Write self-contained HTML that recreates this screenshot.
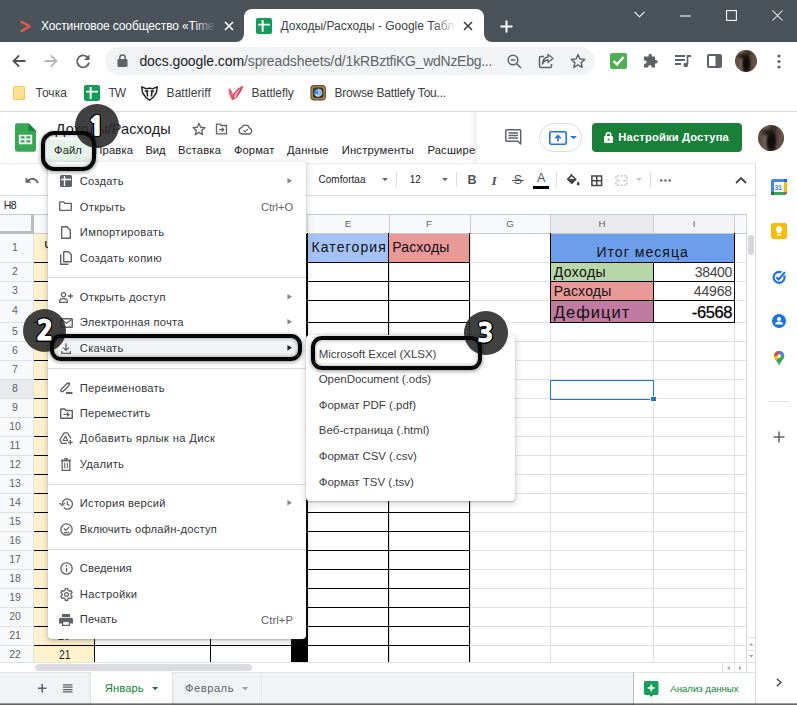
<!DOCTYPE html>
<html lang="ru">
<head>
<meta charset="utf-8">
<title>Доходы/Расходы - Google Таблицы</title>
<style>
html,body{margin:0;padding:0;}
body{width:797px;height:705px;overflow:hidden;position:relative;background:#fff;font-family:"Liberation Sans",sans-serif;color:#202124;}
.abs{position:absolute;}
.t{position:absolute;white-space:nowrap;line-height:1;}
svg{position:absolute;overflow:visible;}
/* ---------- browser chrome ---------- */
#tabbar{left:0;top:0;width:797px;height:43px;background:#4a535a;}
#tabactive{left:244px;top:9px;width:240px;height:34px;background:#fff;border-radius:8px 8px 0 0;}
#toolbar{left:0;top:42.400px;width:797px;height:35.600px;background:#fff;}
#omni{left:105px;top:47px;width:490px;height:28px;border-radius:14px;background:#f1f3f4;}
#bookbar{left:0;top:78px;width:797px;height:32.500px;background:#fff;border-bottom:1px solid #dadce0;}
.bm{font-size:12px;color:#3c4043;top:86.800px;}
/* ---------- sheets ---------- */
.menu{font-size:11.200px;color:#202124;}
.mi{font-size:11.200px;color:#33373b;left:79.800px;}
.sc{font-size:11.200px;color:#5f6368;}
.sm{font-size:11.500px;color:#3c4043;left:318.700px;}
.rh{font-size:10.500px;color:#5f6368;width:30px;text-align:center;left:0;}
.ch{font-size:9.700px;color:#5f6368;text-align:center;top:219px;}
.sep{position:absolute;height:1px;background:#dadce0;left:48px;width:258px;}
.cell{position:absolute;box-sizing:border-box;}
</style>
</head>
<body>
<!-- ================= BROWSER CHROME ================= -->
<div id="tabbar" class="abs"></div>
<div id="tabactive" class="abs"></div>
<!-- curved tab feet -->
<svg style="left:236px;top:34.400px" width="8" height="8"><path d="M8 0 V8 H0 A8 8 0 0 0 8 0Z" fill="#fff"/></svg>
<svg style="left:484px;top:34.400px" width="8" height="8"><path d="M0 0 V8 H8 A8 8 0 0 1 0 0Z" fill="#fff"/></svg>
<!-- inactive tab -->
<svg style="left:19.500px;top:19.500px" width="12" height="13" viewBox="0 0 12 13"><path d="M1.600 1.800 L9.600 6.400 L1.600 11" fill="none" stroke="#e05a4e" stroke-width="2.500" stroke-linejoin="round" stroke-linecap="round"/></svg>
<div class="t" style="letter-spacing:-0.110px;left:41px;top:20.400px;font-size:12px;color:#fff;">Хостинговое сообщество «Time</div>
<div class="abs" style="left:194px;top:14px;width:22px;height:24px;background:linear-gradient(90deg,rgba(74,83,90,0),#4a535a);"></div>
<svg style="left:224px;top:21px" width="10" height="10" viewBox="0 0 10 10"><path d="M1 1 L9 9 M9 1 L1 9" stroke="#fff" stroke-width="1.6"/></svg>
<!-- active tab -->
<svg style="left:256px;top:17.700px" width="16" height="16" viewBox="0 0 17 17"><rect width="17" height="17" rx="2" fill="#0f9d58"/><path d="M6 2.200 h2.100 v3.800 h6.700 v2.100 h-6.700 v6.700 h-2.100 v-6.700 h-3.800 v-2.100 h3.800z" fill="#fff"/></svg>
<div class="t" style="letter-spacing:-0.004px;left:280.400px;top:20.400px;font-size:12px;color:#3c4043;">Доходы/Расходы - Google Табл</div>
<div class="abs" style="left:434px;top:14px;width:22px;height:24px;background:linear-gradient(90deg,rgba(255,255,255,0),#fff);"></div>
<svg style="left:463px;top:21px" width="10" height="10" viewBox="0 0 10 10"><path d="M1 1 L9 9 M9 1 L1 9" stroke="#3c4043" stroke-width="1.6"/></svg>
<svg style="left:500px;top:20px" width="13" height="13" viewBox="0 0 13 13"><path d="M6.5 0.5 V12.5 M0.5 6.5 H12.5" stroke="#fff" stroke-width="2"/></svg>
<!-- window controls -->
<svg style="left:634px;top:11px" width="11" height="7" viewBox="0 0 11 7"><path d="M0.5 0.8 L5.5 5.800 L10.5 0.8" fill="none" stroke="#fff" stroke-width="1.050"/></svg>
<svg style="left:680px;top:14.500px" width="11" height="2" viewBox="0 0 11 2"><path d="M0 1 H11" stroke="#fff" stroke-width="1.050"/></svg>
<svg style="left:726px;top:10px" width="11" height="11" viewBox="0 0 11 11"><rect x="0.600" y="0.600" width="9.800" height="9.800" fill="none" stroke="#fff" stroke-width="1.050"/></svg>
<svg style="left:772px;top:10px" width="11" height="11" viewBox="0 0 11 11"><path d="M0.5 0.5 L10.5 10.500 M10.5 0.5 L0.5 10.500" stroke="#fff" stroke-width="1.050"/></svg>

<!-- toolbar -->
<div id="toolbar" class="abs"></div>
<svg style="left:12px;top:54px" width="14" height="14" viewBox="0 0 14 14"><path d="M13.500 7 H2 M7.200 1.300 L1.500 7 L7.200 12.700" fill="none" stroke="#4f5357" stroke-width="1.800"/></svg>
<svg style="left:44px;top:54px" width="14" height="14" viewBox="0 0 14 14"><path d="M0.500 7 H12 M6.800 1.300 L12.500 7 L6.800 12.700" fill="none" stroke="#b4b7bb" stroke-width="1.800"/></svg>
<svg style="left:75px;top:53px" width="16" height="16" viewBox="0 0 16 16"><path d="M13.2 5.2 A6 6 0 1 0 14 9.5" fill="none" stroke="#5f6368" stroke-width="1.8"/><path d="M14.5 1.5 V7 H9Z" fill="#5f6368"/></svg>
<div id="omni" class="abs"></div>
<svg style="left:117px;top:54px" width="11" height="13" viewBox="0 0 11 13"><rect x="0.5" y="5" width="10" height="8" rx="1.2" fill="#5f6368"/><path d="M2.8 5.5 V3.6 A2.7 2.7 0 0 1 8.2 3.6 V5.5" fill="none" stroke="#5f6368" stroke-width="1.5"/></svg>
<div class="t" style="letter-spacing:-0.083px;left:139.400px;top:54px;font-size:14px;color:#202124;">docs.google.com</div><div class="t" style="letter-spacing:-0.122px;left:244px;top:54px;font-size:14px;color:#5f6368;">/spreadsheets/d/1kRB</div><div class="t" style="letter-spacing:-0.282px;left:379.300px;top:54px;font-size:14px;color:#5f6368;">ztfiKG_wdNzEbg...</div>
<!-- omnibox icons -->
<svg style="left:507px;top:54px" width="15" height="15" viewBox="0 0 15 15"><circle cx="6" cy="6" r="4.8" fill="none" stroke="#5f6368" stroke-width="1.5"/><path d="M9.5 9.5 L14 14 M3.8 6 H8.2" stroke="#5f6368" stroke-width="1.5"/></svg>
<svg style="left:538px;top:53px" width="16" height="16" viewBox="0 0 16 16"><path d="M6 3.5 H3 A1.5 1.5 0 0 0 1.5 5 V13 A1.5 1.5 0 0 0 3 14.500 H12 A1.5 1.5 0 0 0 13.500 13 V11" fill="none" stroke="#5f6368" stroke-width="1.5"/><path d="M10 1.500 L15 5.500 L10 9.500 V7 C7 7 5.500 8.500 4.500 11 C4.700 7 6.500 4.300 10 4Z" fill="none" stroke="#5f6368" stroke-width="1.4" stroke-linejoin="round"/></svg>
<svg style="left:570px;top:53px" width="16" height="16" viewBox="0 0 16 16"><path d="M8 1.5 L9.900 6 L14.800 6.400 L11.100 9.600 L12.200 14.400 L8 11.900 L3.800 14.400 L4.900 9.600 L1.200 6.400 L6.100 6Z" fill="none" stroke="#5f6368" stroke-width="1.4" stroke-linejoin="round"/></svg>
<!-- extension icons -->
<svg style="left:610px;top:53px" width="17" height="16" viewBox="0 0 17 16"><rect width="17" height="16" rx="2" fill="#4caf50"/><path d="M3.500 8 L7 11.500 L13.500 4" fill="none" stroke="#fff" stroke-width="2.4"/></svg>
<svg style="left:642px;top:53px" width="16" height="16" viewBox="0 0 16 16"><path d="M6.500 2.500 A1.700 1.700 0 0 1 9.900 2.500 V3.500 H13 V7 H14 A1.700 1.700 0 0 1 14 10.400 H13 V14.500 H9.500 V13.500 A1.600 1.600 0 0 0 6.300 13.500 V14.500 H2 V10.700 H3 A1.600 1.600 0 0 0 3 7.500 H2 V3.500 H6.500Z" fill="#5f6368"/></svg>
<svg style="left:675px;top:54px" width="16" height="14" viewBox="0 0 16 14"><path d="M0 2 H10 M0 6 H10 M0 10 H6" stroke="#5f6368" stroke-width="1.8"/><path d="M12.500 1 V10.500" stroke="#5f6368" stroke-width="1.6"/><path d="M12.500 1 H16 V3 H12.500Z" fill="#5f6368"/><circle cx="10.800" cy="11" r="2.300" fill="#5f6368"/></svg>
<svg style="left:707px;top:54px" width="15" height="14" viewBox="0 0 15 14"><rect x="1" y="1" width="13" height="12" rx="1" fill="none" stroke="#5f6368" stroke-width="2"/><rect x="8.500" y="1" width="5.500" height="12" fill="#5f6368"/></svg>
<div class="abs" style="left:735px;top:50px;width:22px;height:22px;border-radius:50%;background:radial-gradient(ellipse 22% 50% at 52% 62%,#0d0b0b 0,#15110f 55%,rgba(21,17,15,0) 100%),radial-gradient(ellipse 30% 18% at 35% 28%,#1c1715 0,rgba(28,23,21,0) 100%),linear-gradient(95deg,#54443b 0,#705e53 30%,#4a3b34 45%,#3a2e29 58%,#5a4a41 75%,#66554b 88%,#43362f 100%);"></div>
<svg style="left:777px;top:54px" width="4" height="15" viewBox="0 0 4 15"><circle cx="2" cy="2" r="1.600" fill="#5f6368"/><circle cx="2" cy="7.500" r="1.600" fill="#5f6368"/><circle cx="2" cy="13" r="1.600" fill="#5f6368"/></svg>

<!-- bookmarks bar -->
<div id="bookbar" class="abs"></div>
<svg style="left:12.500px;top:86px" width="12" height="14" viewBox="0 0 12 14"><path d="M1.500 0.500 H10.500 A1 1 0 0 1 11.500 1.500 V13 A0.500 0.500 0 0 1 11 13.500 H1.500 A1 1 0 0 1 0.500 12.500 V1.500 A1 1 0 0 1 1.500 0.500Z" fill="#fde293" stroke="#f6c845" stroke-width="1"/><path d="M9.500 13.500 V11.500 H11.500" fill="none" stroke="#f6c845" stroke-width="1"/></svg>
<div class="t bm" style="letter-spacing:0.030px;left:35.500px;">Точка</div>
<svg style="left:84px;top:85px" width="16" height="16" viewBox="0 0 17 17"><rect width="17" height="17" rx="2" fill="#0f9d58"/><path d="M6 2.200 h2.100 v3.800 h6.700 v2.100 h-6.700 v6.700 h-2.100 v-6.700 h-3.800 v-2.100 h3.800z" fill="#fff"/></svg>
<div class="t bm" style="letter-spacing:-1.028px;left:108.400px;">TW</div>
<svg style="left:141.300px;top:85.500px" width="17" height="15" viewBox="0 0 17 15"><path d="M0.800 0.800 L5 2.700 L8.500 2.100 L12 2.700 L16.200 0.800 L15.500 6.500 L12.200 11.300 L8.500 14.200 L4.800 11.300 L1.500 6.500Z" fill="#fff" stroke="#1b1b1b" stroke-width="1.400" stroke-linejoin="round"/><path d="M3.800 5 H7.400 M5.900 5 L6.600 10.500 M9.600 5 H13.200 M11.100 5 L10.400 10.500" stroke="#1b1b1b" stroke-width="1.500" fill="none"/></svg>
<div class="t bm" style="letter-spacing:0.039px;left:166.600px;">Battleriff</div>
<svg style="left:227.500px;top:85px" width="16" height="15.500" viewBox="0 0 16 16"><path d="M0.500 3 C3.200 4.500 4.800 7.500 5.200 11.500 L3.600 14.800 C1.300 11.500 0.300 7.500 0.500 3Z" fill="#ea6074"/><path d="M3.600 15.600 C4 9 8.500 3.500 15.500 0.600 C14.800 4 13.200 7.500 10.500 10.800 C9 13.300 6.300 15.200 3.600 15.600Z" fill="#e4465c"/><path d="M5.800 12.800 C6.800 9 9.300 5.800 12.600 3.400 C10.600 6.300 9 9.300 8 12.600Z" fill="#fbd3d8"/></svg>
<div class="t bm" style="letter-spacing:-0.054px;left:251.600px;">Battlefly</div>
<svg style="left:309.500px;top:85.300px" width="16.300" height="15.500" viewBox="0 0 16 16"><rect x="0.600" y="0.600" width="14.800" height="14.800" rx="3.200" fill="#b08a4c" stroke="#6b5128" stroke-width="1.200"/><rect x="2.600" y="2.600" width="10.800" height="10.800" rx="2.600" fill="#3b2f22"/><circle cx="8" cy="8" r="4.300" fill="#3f86d2"/><path d="M8 4.600 A3.400 3.400 0 1 1 4.800 9.200 A2.300 2.300 0 1 0 8 6.200 A1.300 1.300 0 1 1 8 8.800" fill="none" stroke="#bfe4ff" stroke-width="1.100"/></svg>
<div class="t bm" style="letter-spacing:-0.197px;left:334.500px;">Browse Battlefy Tou...</div>


<!-- ================= SHEETS HEADER ================= -->
<svg style="left:15px;top:123px" width="21" height="29" viewBox="0 0 22 30"><path d="M2.500 0 H14 L22 8 V27.500 A2.500 2.500 0 0 1 19.500 30 H2.500 A2.500 2.500 0 0 1 0 27.500 V2.500 A2.500 2.500 0 0 1 2.500 0Z" fill="#34a853"/><path d="M14 0 L22 8 H14Z" fill="#188038"/><path d="M4 12 H18 V22 H4Z M6 13.800 V16.100 H10.100 V13.800Z M11.900 13.800 V16.100 H16 V13.800Z M6 17.900 V20.200 H10.100 V17.900Z M11.900 17.900 V20.200 H16 V17.900Z" fill="#fff" fill-rule="evenodd"/></svg>
<div class="t" style="letter-spacing:0.089px;left:55.600px;top:121.600px;font-size:14.500px;color:#202124;">Доходы/Расходы</div>
<svg style="left:192px;top:122px" width="14" height="14" viewBox="0 0 16 16"><path d="M8 1.500 L9.900 6 L14.800 6.400 L11.100 9.600 L12.200 14.400 L8 11.900 L3.800 14.400 L4.900 9.600 L1.200 6.400 L6.100 6Z" fill="none" stroke="#5f6368" stroke-width="1.500" stroke-linejoin="round"/></svg>
<svg style="left:215px;top:123px" width="13" height="12" viewBox="0 0 13 12"><path d="M1.500 1.200 H5 L6.200 2.500 H11.500 V10.800 H1.500Z" fill="none" stroke="#5f6368" stroke-width="1.300"/><path d="M4 6.700 H8.500 M6.800 4.800 L8.800 6.700 L6.800 8.600" fill="none" stroke="#5f6368" stroke-width="1.200"/></svg>
<svg style="left:238px;top:124px" width="15" height="11" viewBox="0 0 15 11"><path d="M4 10 A3.200 3.200 0 0 1 3.600 3.700 A4.200 4.200 0 0 1 11.500 4.200 A3 3 0 0 1 11.500 10Z" fill="none" stroke="#5f6368" stroke-width="1.300"/><path d="M5.500 6.500 L7 8 L9.800 5.200" fill="none" stroke="#5f6368" stroke-width="1.200"/></svg>
<!-- menubar -->
<div class="abs" style="left:48px;top:140px;width:40.600px;height:22px;background:#e6f4ea;border-radius:3px;"></div>
<div class="abs" style="left:0;top:139px;width:476px;height:24px;overflow:hidden;">
<div class="t menu" style="letter-spacing:0.096px;left:54.100px;top:6.200px;">Файл</div>
<div class="t menu" style="letter-spacing:0.167px;left:94.300px;top:6.200px;">Правка</div>
<div class="t menu" style="letter-spacing:-0.183px;left:145.600px;top:6.200px;">Вид</div>
<div class="t menu" style="letter-spacing:0.229px;left:178px;top:6.200px;">Вставка</div>
<div class="t menu" style="letter-spacing:0.125px;left:233.900px;top:6.200px;">Формат</div>
<div class="t menu" style="letter-spacing:0.196px;left:287px;top:6.200px;">Данные</div>
<div class="t menu" style="letter-spacing:0.230px;left:341.700px;top:6.200px;">Инструменты</div>
<div class="t menu" style="left:427.400px;top:6.200px;letter-spacing:.2px;">Расширения</div>
</div>
<div class="abs" style="left:469px;top:112px;width:8px;height:51px;background:linear-gradient(90deg,rgba(0,0,0,0),rgba(0,0,0,0.060));"></div>
<div class="abs" style="left:477px;top:112px;width:320px;height:51px;background:#fff;"></div>
<!-- comment icon -->
<svg style="left:505px;top:129px" width="17" height="16" viewBox="0 0 17 16"><path d="M1.800 0.800 H14.700 A1 1 0 0 1 15.700 1.800 V15 L12.800 12.300 H1.800 A1 1 0 0 1 0.800 11.300 V1.800 A1 1 0 0 1 1.800 0.800Z" fill="none" stroke="#5f6368" stroke-width="1.500" stroke-linejoin="round"/><path d="M3.500 4 H13 M3.500 6.500 H13 M3.500 9 H13" stroke="#5f6368" stroke-width="1.300"/></svg>
<!-- present pill -->
<div class="abs" style="left:539px;top:123px;width:43px;height:29px;border:1px solid #dadce0;border-radius:15px;box-sizing:border-box;"></div>
<svg style="left:549px;top:130.500px" width="18" height="14" viewBox="0 0 18 14"><rect x="0.800" y="0.800" width="16.400" height="12.400" rx="1.500" fill="none" stroke="#1a73e8" stroke-width="1.600"/><path d="M9 10.500 V5 M6.300 7.300 L9 4.600 L11.700 7.300" fill="none" stroke="#1a73e8" stroke-width="1.600"/></svg>
<svg style="left:570.300px;top:136.300px" width="7" height="3" viewBox="0 0 7 3"><path d="M0 0 H7 L3.500 3Z" fill="#1a73e8"/></svg>
<!-- share button -->
<div class="abs" style="left:592px;top:123px;width:150px;height:28.500px;background:#188038;border-radius:4px;"></div>
<svg style="left:604px;top:132px" width="9" height="11" viewBox="0 0 9 11"><rect x="0" y="4" width="9" height="7" rx="1" fill="#fff"/><path d="M2.200 4.500 V3 A2.300 2.300 0 0 1 6.800 3 V4.500" fill="none" stroke="#fff" stroke-width="1.400"/><circle cx="4.500" cy="7.500" r="1" fill="#188038"/></svg>
<div class="t" style="letter-spacing:0.152px;left:618.300px;top:132.200px;font-size:11.200px;font-weight:bold;color:#fff;">Настройки Доступа</div>
<div class="abs" style="left:757.700px;top:124.500px;width:26.500px;height:26.500px;border-radius:50%;background:radial-gradient(ellipse 22% 50% at 52% 62%,#0d0b0b 0,#15110f 55%,rgba(21,17,15,0) 100%),radial-gradient(ellipse 30% 18% at 35% 28%,#1c1715 0,rgba(28,23,21,0) 100%),linear-gradient(95deg,#54443b 0,#705e53 30%,#4a3b34 45%,#3a2e29 58%,#5a4a41 75%,#66554b 88%,#43362f 100%);"></div>

<!-- ================= TOOLBAR ================= -->
<div class="abs" style="left:0;top:163px;width:755px;height:1px;background:#e8eaed;"></div>
<div class="abs" style="left:0;top:195px;width:755px;height:1px;background:#dadce0;"></div>
<svg style="left:25px;top:176px" width="14" height="8" viewBox="0 0 14 8"><path d="M3.500 4.500 C6 2 10.500 2 13 7" fill="none" stroke="#5f6368" stroke-width="1.800"/><path d="M0.500 1.200 V6.800 H6.100Z" fill="#5f6368"/></svg>
<div class="t" style="letter-spacing:0.035px;left:318.500px;top:175.100px;font-size:10px;color:#202124;">Comfortaa</div>
<svg style="left:382px;top:178.300px" width="6" height="3.200" viewBox="0 0 7 4"><path d="M0 0 H7 L3.500 4Z" fill="#5f6368"/></svg>
<div class="abs" style="left:396px;top:171.500px;width:1px;height:15px;background:#dadce0;"></div>
<div class="t" style="letter-spacing:0.088px;left:409.700px;top:175.100px;font-size:10px;color:#202124;">12</div>
<svg style="left:442px;top:178.300px" width="6" height="3.200" viewBox="0 0 7 4"><path d="M0 0 H7 L3.500 4Z" fill="#5f6368"/></svg>
<div class="abs" style="left:456px;top:171.500px;width:1px;height:15px;background:#dadce0;"></div>
<div class="t" style="left:467.500px;top:174px;font-size:12.500px;font-weight:bold;color:#50545a;">B</div>
<div class="t" style="left:491.500px;top:173.500px;font-size:13.500px;font-weight:bold;font-style:italic;color:#50545a;font-family:'Liberation Serif',serif;">I</div>
<div class="t" style="left:513.700px;top:174px;font-size:12.500px;color:#50545a;">S</div><div class="abs" style="left:512px;top:180px;width:11.500px;height:1.200px;background:#50545a;"></div>
<div class="t" style="left:537px;top:172px;font-size:12.500px;color:#50545a;">A</div>
<div class="abs" style="left:533px;top:185.500px;width:16px;height:3px;background:#000;"></div>
<div class="abs" style="left:556px;top:171.500px;width:1px;height:15px;background:#dadce0;"></div>
<svg style="left:566px;top:173px" width="14" height="13" viewBox="0 0 14 13"><path d="M4.500 0.800 L10 6.300 L5.800 10.500 L1.400 6.100 L5.700 1.900" fill="#444746" stroke="#444746" stroke-width="1.200" stroke-linejoin="round"/><path d="M3.200 6 L5.800 3.400 L8.400 6Z" fill="#fff"/><path d="M12.200 8.200 C13 9.400 13.600 10.200 13.600 11 A1.400 1.400 0 0 1 10.800 11 C10.800 10.200 11.400 9.400 12.200 8.200Z" fill="#444746"/></svg>
<svg style="left:590.500px;top:174.500px" width="11.500" height="11.500" viewBox="0 0 13 13"><path d="M1 1 H12 V12 H1Z M6.500 1 V12 M1 6.500 H12" fill="none" stroke="#444746" stroke-width="1.700"/></svg>
<svg style="left:614.500px;top:174.500px" width="13" height="11" viewBox="0 0 14 12"><path d="M1 4 V1 H13 V4 M1 8 V11 H13 V8" fill="none" stroke="#bdc1c6" stroke-width="1.500" stroke-dasharray="2.500 1.500"/><path d="M1.500 6 H5 M12.500 6 H9" stroke="#bdc1c6" stroke-width="1.500"/></svg>
<svg style="left:636px;top:178.300px" width="6" height="3.200" viewBox="0 0 7 4"><path d="M0 0 H7 L3.500 4Z" fill="#bdc1c6"/></svg>
<div class="abs" style="left:650px;top:171.500px;width:1px;height:15px;background:#dadce0;"></div>
<svg style="left:660px;top:179px" width="11" height="3" viewBox="0 0 11 3"><circle cx="1.300" cy="1.500" r="1.200" fill="#5f6368"/><circle cx="5.500" cy="1.500" r="1.200" fill="#5f6368"/><circle cx="9.700" cy="1.500" r="1.200" fill="#5f6368"/></svg>
<svg style="left:735px;top:176px" width="12" height="8" viewBox="0 0 12 8"><path d="M1 7 L6 2 L11 7" fill="none" stroke="#444746" stroke-width="1.800"/></svg>

<!-- ================= SIDE PANEL ================= -->
<div class="abs" style="left:755px;top:163px;width:1px;height:542px;background:#dadce0;"></div>
<div class="abs" style="left:756px;top:163px;width:41px;height:542px;background:#fff;"></div>
<!-- calendar -->
<svg style="left:771px;top:179px" width="16" height="16" viewBox="0 0 16 16"><rect x="0" y="0" width="16" height="16" rx="2" fill="#4285f4"/><rect x="3" y="3" width="10" height="10" fill="#fff"/><path d="M13 13 H16 L13 16Z" fill="#ea4335"/><rect x="0" y="13" width="13" height="3" fill="#34a853"/><rect x="13" y="3" width="3" height="10" fill="#fbbc04"/><rect x="0" y="3" width="3" height="10" fill="#4285f4"/><rect x="0" y="13" width="3" height="3" fill="#188038"/><rect x="13" y="0" width="3" height="3" fill="#1967d2"/></svg>
<div class="t" style="left:774.500px;top:183.500px;font-size:7px;font-weight:bold;color:#4285f4;letter-spacing:-0.300px;">31</div>
<!-- keep -->
<svg style="left:771px;top:223px" width="16" height="16" viewBox="0 0 16 16"><rect width="16" height="16" rx="2" fill="#fbbc04"/><path d="M8 3 A3.200 3.200 0 0 1 10 8.700 V10 H6 V8.700 A3.200 3.200 0 0 1 8 3Z" fill="#fff"/><rect x="6" y="11" width="4" height="1.500" fill="#fff"/></svg>
<!-- tasks -->
<svg style="left:772.200px;top:269.500px" width="14" height="14" viewBox="0 0 16 16"><path d="M14 6.200 A6.300 6.300 0 1 1 10.800 2.700" fill="none" stroke="#1a73e8" stroke-width="2.500"/><path d="M5 8.200 L7.600 10.800 L14.800 2.400" fill="none" stroke="#1a73e8" stroke-width="2.500"/></svg>
<!-- contacts -->
<svg style="left:772.200px;top:314.200px" width="14" height="14" viewBox="0 0 16 16"><circle cx="8" cy="8" r="8" fill="#1a73e8"/><circle cx="8" cy="5.800" r="2.300" fill="#fff"/><path d="M3.500 12 A4.500 3.500 0 0 1 12.500 12Z" fill="#fff"/></svg>
<!-- maps -->
<svg style="left:774.400px;top:351px" width="10.300" height="14.500" viewBox="0 0 12 17"><path d="M6 0 A6 6 0 0 1 12 6 C12 10 8 12 6 17 C4 12 0 10 0 6 A6 6 0 0 1 6 0Z" fill="#34a853"/><path d="M6 0 A6 6 0 0 1 12 6 L6 6Z" fill="#4285f4"/><path d="M6 0 A6 6 0 0 0 0 6 L6 6Z" fill="#ea4335"/><path d="M0 6 C0 8 1.500 10 3 11.500 L6 6Z" fill="#fbbc04"/><circle cx="6" cy="6" r="2.200" fill="#fff"/></svg>
<div class="abs" style="left:769px;top:401px;width:20px;height:1px;background:#dadce0;"></div>
<svg style="left:773px;top:431px" width="12" height="12" viewBox="0 0 12 12"><path d="M6 0.500 V11.500 M0.500 6 H11.500" stroke="#5f6368" stroke-width="1.500"/></svg>
<svg style="left:775.500px;top:677.500px" width="5.700" height="9" viewBox="0 0 7 11"><path d="M1 1 L6 5.500 L1 10" fill="none" stroke="#444746" stroke-width="1.600"/></svg>

<!-- ================= FORMULA BAR ================= -->
<div class="t" style="letter-spacing:-0.669px;left:3.800px;top:200.400px;font-size:10.500px;color:#202124;">H8</div>
<div class="abs" style="left:0;top:214px;width:747px;height:1px;background:#c6c8ca;"></div>


<div class="abs" id="grid" style="left:0;top:215px;width:755px;height:447px;overflow:hidden;background:#fff;">
<div class="abs" style="left:0;top:0;width:746px;height:18px;background:#f8f9fa;"></div>
<div class="abs" style="left:550px;top:0;width:103px;height:18px;background:#e8eaed;"></div>
<div class="abs" style="left:653px;top:0;width:82px;height:18px;background:#f1f3f4;"></div>
<div class="abs" style="left:0;top:0;width:34px;height:447px;background:#f8f9fa;"></div>
<div class="abs" style="left:0;top:164px;width:34px;height:19px;background:#e8eaed;"></div>
<div class="abs" style="left:34px;top:19px;width:61px;height:428px;background:#fff2cc;"></div>
<div class="abs" style="left:0;top:47px;width:746px;height:1px;background:#e1e1e1;"></div>
<div class="abs" style="left:0;top:66px;width:746px;height:1px;background:#e1e1e1;"></div>
<div class="abs" style="left:0;top:85px;width:746px;height:1px;background:#e1e1e1;"></div>
<div class="abs" style="left:0;top:107px;width:746px;height:1px;background:#e1e1e1;"></div>
<div class="abs" style="left:0;top:126px;width:746px;height:1px;background:#e1e1e1;"></div>
<div class="abs" style="left:0;top:145px;width:746px;height:1px;background:#e1e1e1;"></div>
<div class="abs" style="left:0;top:164px;width:746px;height:1px;background:#e1e1e1;"></div>
<div class="abs" style="left:0;top:183px;width:746px;height:1px;background:#e1e1e1;"></div>
<div class="abs" style="left:0;top:202px;width:746px;height:1px;background:#e1e1e1;"></div>
<div class="abs" style="left:0;top:221px;width:746px;height:1px;background:#e1e1e1;"></div>
<div class="abs" style="left:0;top:240px;width:746px;height:1px;background:#e1e1e1;"></div>
<div class="abs" style="left:0;top:259px;width:746px;height:1px;background:#e1e1e1;"></div>
<div class="abs" style="left:0;top:278px;width:746px;height:1px;background:#e1e1e1;"></div>
<div class="abs" style="left:0;top:297px;width:746px;height:1px;background:#e1e1e1;"></div>
<div class="abs" style="left:0;top:316px;width:746px;height:1px;background:#e1e1e1;"></div>
<div class="abs" style="left:0;top:335px;width:746px;height:1px;background:#e1e1e1;"></div>
<div class="abs" style="left:0;top:354px;width:746px;height:1px;background:#e1e1e1;"></div>
<div class="abs" style="left:0;top:373px;width:746px;height:1px;background:#e1e1e1;"></div>
<div class="abs" style="left:0;top:392px;width:746px;height:1px;background:#e1e1e1;"></div>
<div class="abs" style="left:0;top:411px;width:746px;height:1px;background:#e1e1e1;"></div>
<div class="abs" style="left:0;top:430px;width:746px;height:1px;background:#e1e1e1;"></div>
<div class="abs" style="left:33px;top:0;width:1px;height:447px;background:#e1e1e1;"></div>
<div class="abs" style="left:307px;top:0;width:1px;height:447px;background:#e1e1e1;"></div>
<div class="abs" style="left:389px;top:0;width:1px;height:447px;background:#e1e1e1;"></div>
<div class="abs" style="left:470px;top:0;width:1px;height:447px;background:#e1e1e1;"></div>
<div class="abs" style="left:550px;top:0;width:1px;height:447px;background:#e1e1e1;"></div>
<div class="abs" style="left:653px;top:0;width:1px;height:447px;background:#e1e1e1;"></div>
<div class="abs" style="left:734px;top:0;width:1px;height:447px;background:#e1e1e1;"></div>
<div class="abs" style="left:746px;top:0;width:1px;height:447px;background:#e1e1e1;"></div>
<div class="abs" style="left:389px;top:0;width:1px;height:18px;background:#c9cbcd;"></div>
<div class="abs" style="left:470px;top:0;width:1px;height:18px;background:#c9cbcd;"></div>
<div class="abs" style="left:550px;top:0;width:1px;height:18px;background:#c9cbcd;"></div>
<div class="abs" style="left:653px;top:0;width:1px;height:18px;background:#c9cbcd;"></div>
<div class="abs" style="left:734px;top:0;width:1px;height:18px;background:#c9cbcd;"></div>
<div class="abs" style="left:746px;top:0;width:1px;height:18px;background:#c9cbcd;"></div>
<div class="abs" style="left:0;top:18px;width:746px;height:1px;background:#c8cacd;"></div>
<div class="abs" style="left:0;top:16px;width:34px;height:3px;background:#b9bbbe;"></div>
<div class="abs" style="left:31px;top:0;width:3px;height:19px;background:#b9bbbe;"></div>
<div class="t ch" style="left:338px;width:20px;top:4px;">E</div>
<div class="t ch" style="left:419px;width:20px;top:4px;">F</div>
<div class="t ch" style="left:500px;width:20px;top:4px;">G</div>
<div class="t ch" style="left:592px;width:20px;top:4px;">H</div>
<div class="t ch" style="left:684px;width:20px;top:4px;">I</div>
<div class="t rh" style="top:27.4px;">1</div>
<div class="t rh" style="top:50.9px;">2</div>
<div class="t rh" style="top:69.9px;">3</div>
<div class="t rh" style="top:90.4px;">4</div>
<div class="t rh" style="top:110.9px;">5</div>
<div class="t rh" style="top:129.9px;">6</div>
<div class="t rh" style="top:148.9px;">7</div>
<div class="t rh" style="top:167.9px;">8</div>
<div class="t rh" style="top:186.9px;">9</div>
<div class="t rh" style="top:205.9px;">10</div>
<div class="t rh" style="top:224.9px;">11</div>
<div class="t rh" style="top:243.9px;">12</div>
<div class="t rh" style="top:262.9px;">13</div>
<div class="t rh" style="top:281.9px;">14</div>
<div class="t rh" style="top:300.9px;">15</div>
<div class="t rh" style="top:319.9px;">16</div>
<div class="t rh" style="top:338.9px;">17</div>
<div class="t rh" style="top:357.9px;">18</div>
<div class="t rh" style="top:376.9px;">19</div>
<div class="t rh" style="top:395.9px;">20</div>
<div class="t rh" style="top:414.9px;">21</div>
<div class="t rh" style="top:433.9px;">22</div>
<div class="abs" style="left:34px;top:47px;width:273px;height:1px;background:#000;"></div>
<div class="abs" style="left:34px;top:66px;width:273px;height:1px;background:#000;"></div>
<div class="abs" style="left:34px;top:85px;width:273px;height:1px;background:#000;"></div>
<div class="abs" style="left:34px;top:107px;width:273px;height:1px;background:#000;"></div>
<div class="abs" style="left:34px;top:126px;width:273px;height:1px;background:#000;"></div>
<div class="abs" style="left:34px;top:145px;width:273px;height:1px;background:#000;"></div>
<div class="abs" style="left:34px;top:164px;width:273px;height:1px;background:#000;"></div>
<div class="abs" style="left:34px;top:183px;width:273px;height:1px;background:#000;"></div>
<div class="abs" style="left:34px;top:202px;width:273px;height:1px;background:#000;"></div>
<div class="abs" style="left:34px;top:221px;width:273px;height:1px;background:#000;"></div>
<div class="abs" style="left:34px;top:240px;width:273px;height:1px;background:#000;"></div>
<div class="abs" style="left:34px;top:259px;width:273px;height:1px;background:#000;"></div>
<div class="abs" style="left:34px;top:278px;width:273px;height:1px;background:#000;"></div>
<div class="abs" style="left:34px;top:297px;width:273px;height:1px;background:#000;"></div>
<div class="abs" style="left:34px;top:316px;width:273px;height:1px;background:#000;"></div>
<div class="abs" style="left:34px;top:335px;width:273px;height:1px;background:#000;"></div>
<div class="abs" style="left:34px;top:354px;width:273px;height:1px;background:#000;"></div>
<div class="abs" style="left:34px;top:373px;width:273px;height:1px;background:#000;"></div>
<div class="abs" style="left:34px;top:392px;width:273px;height:1px;background:#000;"></div>
<div class="abs" style="left:34px;top:411px;width:273px;height:1px;background:#000;"></div>
<div class="abs" style="left:34px;top:430px;width:273px;height:1px;background:#000;"></div>
<div class="abs" style="left:94px;top:19px;width:1px;height:428px;background:#000;"></div>
<div class="abs" style="left:210px;top:19px;width:1px;height:428px;background:#000;"></div>
<div class="abs" style="left:291px;top:19px;width:17px;height:428px;background:#000;"></div>
<div class="t cf" style="left:44px;top:24.3px;font-size:14px;color:#222;">Число</div>
<div class="t" style="left:58px;top:414.1px;font-size:13.500px;color:#222;transform:scaleX(.8);transform-origin:0 50%;">20</div>
<div class="t" style="left:58.700px;top:433.1px;font-size:13.500px;color:#222;transform:scaleX(.77);transform-origin:0 50%;">21</div>
<div class="abs" style="left:308px;top:19px;width:81px;height:28px;background:#a4c2f4;"></div>
<div class="abs" style="left:389px;top:19px;width:81px;height:28px;background:#ea9999;"></div>
<div class="t cf" style="letter-spacing:1.127px;left:311.400px;top:24.9px;font-size:14px;color:#111;">Категория</div>
<div class="t cf" style="letter-spacing:0.169px;left:392.200px;top:24.9px;font-size:14px;color:#111;">Расходы</div>
<div class="abs" style="left:307px;top:47px;width:163px;height:1px;background:#000;"></div>
<div class="abs" style="left:307px;top:66px;width:163px;height:1px;background:#000;"></div>
<div class="abs" style="left:307px;top:85px;width:163px;height:1px;background:#000;"></div>
<div class="abs" style="left:307px;top:107px;width:163px;height:1px;background:#000;"></div>
<div class="abs" style="left:307px;top:126px;width:163px;height:1px;background:#000;"></div>
<div class="abs" style="left:307px;top:145px;width:163px;height:1px;background:#000;"></div>
<div class="abs" style="left:307px;top:164px;width:163px;height:1px;background:#000;"></div>
<div class="abs" style="left:307px;top:183px;width:163px;height:1px;background:#000;"></div>
<div class="abs" style="left:307px;top:202px;width:163px;height:1px;background:#000;"></div>
<div class="abs" style="left:307px;top:221px;width:163px;height:1px;background:#000;"></div>
<div class="abs" style="left:307px;top:240px;width:163px;height:1px;background:#000;"></div>
<div class="abs" style="left:307px;top:259px;width:163px;height:1px;background:#000;"></div>
<div class="abs" style="left:307px;top:278px;width:163px;height:1px;background:#000;"></div>
<div class="abs" style="left:307px;top:297px;width:163px;height:1px;background:#000;"></div>
<div class="abs" style="left:307px;top:316px;width:163px;height:1px;background:#000;"></div>
<div class="abs" style="left:307px;top:335px;width:163px;height:1px;background:#000;"></div>
<div class="abs" style="left:307px;top:354px;width:163px;height:1px;background:#000;"></div>
<div class="abs" style="left:307px;top:373px;width:163px;height:1px;background:#000;"></div>
<div class="abs" style="left:307px;top:392px;width:163px;height:1px;background:#000;"></div>
<div class="abs" style="left:307px;top:411px;width:163px;height:1px;background:#000;"></div>
<div class="abs" style="left:307px;top:430px;width:163px;height:1px;background:#000;"></div>
<div class="abs" style="left:306.5px;top:18px;width:1px;height:429px;background:#000;"></div>
<div class="abs" style="left:388px;top:18px;width:1px;height:429px;background:#000;"></div>
<div class="abs" style="left:469px;top:18px;width:1px;height:429px;background:#000;"></div>
<div class="abs" style="left:550px;top:19px;width:185px;height:28px;background:#6d9eeb;"></div>
<div class="abs" style="left:550px;top:47px;width:103px;height:19px;background:#b6d7a8;"></div>
<div class="abs" style="left:550px;top:66px;width:103px;height:19px;background:#ea9999;"></div>
<div class="abs" style="left:550px;top:85px;width:103px;height:22px;background:#c27ba0;"></div>
<div class="t cf" style="letter-spacing:1.045px;left:596.400px;top:30.2px;font-size:14px;color:#111;">Итог месяца</div>
<div class="t cf" style="letter-spacing:0.395px;left:553.800px;top:50.0px;font-size:14px;color:#111;">Доходы</div>
<div class="t cf" style="letter-spacing:0.212px;left:553.800px;top:68.8px;font-size:14px;color:#111;">Расходы</div>
<div class="t cf" style="letter-spacing:1.018px;left:553.800px;top:89.3px;font-size:16.500px;color:#111;">Дефицит</div>
<div class="t" style="letter-spacing:-0.347px;left:694.800px;top:50.0px;font-size:14px;color:#444;">38400</div>
<div class="t" style="letter-spacing:-0.147px;left:693.800px;top:68.8px;font-size:14px;color:#444;">44968</div>
<div class="t" style="letter-spacing:-0.401px;left:691.800px;top:88.8px;font-size:16.500px;color:#000;-webkit-text-stroke:.25px #000;">-6568</div>
<div class="abs" style="left:550px;top:47px;width:185px;height:1px;background:#000;"></div>
<div class="abs" style="left:550px;top:66px;width:185px;height:1px;background:#000;"></div>
<div class="abs" style="left:550px;top:85px;width:185px;height:1px;background:#000;"></div>
<div class="abs" style="left:550px;top:107px;width:185px;height:1px;background:#000;"></div>
<div class="abs" style="left:549.5px;top:18px;width:1px;height:90px;background:#000;"></div>
<div class="abs" style="left:653px;top:47px;width:1px;height:61px;background:#000;"></div>
<div class="abs" style="left:734px;top:18px;width:1px;height:90px;background:#000;"></div>
<div class="abs" style="left:550px;top:165.2px;width:104px;height:19.500px;border:1.500px solid #1a73e8;box-sizing:border-box;"></div>
<div class="abs" style="left:650px;top:180.8px;width:5px;height:4.600px;background:#1a73e8;border:1px solid #fff;box-sizing:content-box;"></div>
</div>
<div class="abs" style="left:746px;top:215px;width:9px;height:447px;background:#fff;border-left:1px solid #d5d7d9;box-sizing:border-box;"></div>
<div class="abs" style="left:747.500px;top:234.800px;width:6.200px;height:19.800px;background:#d5d7db;border-radius:3.100px;"></div>
<div class="abs" style="left:746px;top:637px;width:9px;height:1px;background:#e1e1e1;"></div>
<div class="abs" style="left:746px;top:650px;width:9px;height:1px;background:#e1e1e1;"></div>
<svg style="left:748.500px;top:642.500px" width="4.400" height="2.600" viewBox="0 0 5 3"><path d="M0 3 H5 L2.500 0Z" fill="#9aa0a6"/></svg>
<svg style="left:748.500px;top:655px" width="4.400" height="2.600" viewBox="0 0 5 3"><path d="M0 0 H5 L2.500 3Z" fill="#9aa0a6"/></svg>
<div class="abs" style="left:0;top:662px;width:755px;height:10px;background:#fff;border-top:1px solid #e1e1e1;box-sizing:border-box;"></div>
<div class="abs" style="left:35px;top:664px;width:216.500px;height:7px;background:#dadce0;border-radius:4px;"></div>
<div class="abs" style="left:722px;top:662px;width:1px;height:10px;background:#e1e1e1;"></div>
<div class="abs" style="left:734px;top:662px;width:1px;height:10px;background:#e1e1e1;"></div>
<div class="abs" style="left:746px;top:662px;width:1px;height:10px;background:#e1e1e1;"></div>
<svg style="left:726.500px;top:665.500px" width="2.600" height="4.400" viewBox="0 0 3 5"><path d="M3 0 V5 L0 2.500Z" fill="#9aa0a6"/></svg>
<svg style="left:739px;top:665.500px" width="2.600" height="4.400" viewBox="0 0 3 5"><path d="M0 0 V5 L3 2.500Z" fill="#9aa0a6"/></svg>
<div class="abs" style="left:0;top:672px;width:755px;height:33px;background:#f1f3f4;border-top:1px solid #e1e3e6;box-sizing:border-box;"></div>
<svg style="left:37.700px;top:684.200px" width="8.400" height="8.400" viewBox="0 0 10 10"><path d="M5 0 V10 M0 5 H10" stroke="#5f6368" stroke-width="1.900"/></svg>
<svg style="left:62.500px;top:684px" width="9.500" height="8.700" viewBox="0 0 11 10"><path d="M0 1 H11 M0 3.700 H11 M0 6.400 H11 M0 9.100 H11" stroke="#5f6368" stroke-width="1.500"/></svg>
<div class="abs" style="left:91px;top:672px;width:81px;height:33px;background:#fff;box-shadow:0 1px 3px rgba(0,0,0,.18);"></div><div class="abs" style="left:261px;top:672px;width:1px;height:33px;background:#e4e6e8;"></div>
<div class="t" style="letter-spacing:0.090px;left:104.800px;top:682.700px;font-size:11.200px;color:#188038;">Январь</div>
<svg style="left:151.800px;top:687px" width="6.400" height="3.300" viewBox="0 0 8 4"><path d="M0 0 H8 L4 4Z" fill="#188038"/></svg>
<div class="t" style="letter-spacing:0.502px;left:185px;top:682.700px;font-size:11.200px;color:#5f6368;">Февраль</div>
<svg style="left:242.400px;top:687px" width="6.400" height="3.300" viewBox="0 0 8 4"><path d="M0 0 H8 L4 4Z" fill="#9aa0a6"/></svg>
<div class="abs" style="left:633px;top:672px;width:122px;height:33px;background:#fdfefe;border-left:1px solid #b8babd;border-top:1px solid #e1e3e6;box-sizing:border-box;"></div>
<svg style="left:644px;top:681px" width="14.500" height="16.500" viewBox="0 0 15 17"><path d="M1.500 0 H13.500 A1.500 1.500 0 0 1 15 1.500 V13 A1.500 1.500 0 0 1 13.500 14.500 H9.500 L7.500 16.500 L5.500 14.500 H1.500 A1.500 1.500 0 0 1 0 13 V1.500 A1.500 1.500 0 0 1 1.500 0Z" fill="#12a05a"/><path d="M7.500 2.800 L8.700 6 L12 7.300 L8.700 8.600 L7.500 11.800 L6.300 8.600 L3 7.300 L6.300 6Z" fill="#fff"/></svg>
<div class="t" style="letter-spacing:-0.006px;left:670.300px;top:684px;font-size:9.600px;color:#188038;">Анализ данных</div>
<div class="abs" style="left:0;top:703px;width:797px;height:2px;background:linear-gradient(180deg,rgba(60,60,60,.35),rgba(30,30,30,.8));"></div>

<div class="abs" style="left:48px;top:162px;width:258px;height:476.500px;background:#fff;border-radius:0 0 4px 4px;box-shadow:0 2px 6px 2px rgba(60,64,67,.15),0 1px 2px rgba(60,64,67,.3);"></div>
<div class="abs" style="left:52px;top:336px;width:248px;height:23px;background:#f1f3f4;border-radius:6px;"></div>
<div class="t mi" style="letter-spacing:0.198px;top:175.5px;">Создать</div>
<svg style="left:287.200px;top:177.6px" width="5.400" height="5.400" viewBox="0 0 5 6"><path d="M0 0 L5 3 L0 6Z" fill="#80868b"/></svg>
<div class="t mi" style="letter-spacing:0.280px;top:201.5px;">Открыть</div>
<div class="t sc" style="letter-spacing:-0.107px;left:233px;width:60px;text-align:right;top:202.0px;">Ctrl+O</div>
<div class="t mi" style="letter-spacing:0.303px;top:226.9px;">Импортировать</div>
<div class="t mi" style="letter-spacing:0.348px;top:252.7px;">Создать копию</div>
<div class="t mi" style="letter-spacing:0.265px;top:291.7px;">Открыть доступ</div>
<svg style="left:287.200px;top:293.8px" width="5.400" height="5.400" viewBox="0 0 5 6"><path d="M0 0 L5 3 L0 6Z" fill="#80868b"/></svg>
<div class="t mi" style="letter-spacing:0.244px;top:317.3px;">Электронная почта</div>
<svg style="left:287.200px;top:319.4px" width="5.400" height="5.400" viewBox="0 0 5 6"><path d="M0 0 L5 3 L0 6Z" fill="#80868b"/></svg>
<div class="t mi" style="letter-spacing:0.264px;top:342.7px;">Скачать</div>
<svg style="left:287.200px;top:344.8px" width="5.400" height="5.400" viewBox="0 0 5 6"><path d="M0 0 L5 3 L0 6Z" fill="#202124"/></svg>
<div class="t mi" style="letter-spacing:0.236px;top:382.8px;">Переименовать</div>
<div class="t mi" style="letter-spacing:0.187px;top:407.7px;">Переместить</div>
<div class="t mi" style="letter-spacing:0.389px;top:433.3px;">Добавить ярлык на Диск</div>
<div class="t mi" style="letter-spacing:0.240px;top:458.9px;">Удалить</div>
<div class="t mi" style="letter-spacing:0.224px;top:498.3px;">История версий</div>
<svg style="left:287.200px;top:500.4px" width="5.400" height="5.400" viewBox="0 0 5 6"><path d="M0 0 L5 3 L0 6Z" fill="#80868b"/></svg>
<div class="t mi" style="letter-spacing:0.208px;top:523.7px;">Включить офлайн-доступ</div>
<div class="t mi" style="letter-spacing:0.099px;top:563.2px;">Сведения</div>
<div class="t mi" style="letter-spacing:0.282px;top:588.7px;">Настройки</div>
<div class="t mi" style="letter-spacing:0.141px;top:614.4px;">Печать</div>
<div class="t sc" style="letter-spacing:0.099px;left:233px;width:60px;text-align:right;top:614.9px;">Ctrl+P</div>
<div class="sep" style="top:277.0px;"></div>
<div class="sep" style="top:367.5px;"></div>
<div class="sep" style="top:483.5px;"></div>
<div class="sep" style="top:548.5px;"></div>
<svg style="left:60.0px;top:175.3px" width="12" height="12" viewBox="0 0 12 12"><rect width="12" height="12" rx="1.500" fill="#5f6368"/><path d="M4.500 1 V11 M1 4.500 H11" stroke="#fff" stroke-width="1.300"/></svg>
<svg style="left:59.3px;top:201.4px" width="13" height="10" viewBox="0 0 13 10"><path d="M0.700 0.900 H4.600 L5.800 2.300 H12.300 V9.300 H0.700Z" fill="none" stroke="#5f6368" stroke-width="1.350" stroke-linejoin="round"/></svg>
<svg style="left:61.0px;top:225.9px" width="10" height="13" viewBox="0 0 10 13"><path d="M0.700 0.700 H6 L9.300 4 V12.300 H0.700Z" fill="none" stroke="#5f6368" stroke-width="1.400" stroke-linejoin="round"/></svg>
<svg style="left:60.0px;top:251.2px" width="12" height="14" viewBox="0 0 12 14"><path d="M3.700 0.700 H8.500 L11.300 3.500 V10.800 H3.700Z" fill="none" stroke="#5f6368" stroke-width="1.400" stroke-linejoin="round"/><path d="M0.700 3.200 V13.300 H8.500" fill="none" stroke="#5f6368" stroke-width="1.400"/></svg>
<svg style="left:59.0px;top:291.7px" width="14" height="11" viewBox="0 0 14 11"><circle cx="4.500" cy="2.800" r="2.100" fill="none" stroke="#5f6368" stroke-width="1.300"/><path d="M0.700 10.300 V9 C0.700 7.300 2.800 6.600 4.500 6.600 C6.200 6.600 8.300 7.300 8.300 9 V10.300Z" fill="none" stroke="#5f6368" stroke-width="1.300"/><path d="M11.500 1.500 V6.500 M9 4 H14" stroke="#5f6368" stroke-width="1.300"/></svg>
<svg style="left:59.5px;top:317.8px" width="13" height="10" viewBox="0 0 13 10"><rect x="0.700" y="0.700" width="11.600" height="8.600" rx="0.800" fill="none" stroke="#5f6368" stroke-width="1.400"/><path d="M1 1.300 L6.500 5.300 L12 1.300" fill="none" stroke="#5f6368" stroke-width="1.300"/></svg>
<svg style="left:61.0px;top:342.9px" width="10" height="11" viewBox="0 0 10 11"><path d="M5 0.300 V7.300 M2.200 4.600 L5 7.400 L7.800 4.600" fill="none" stroke="#5f6368" stroke-width="1.300"/><path d="M0.650 8 V10.300 H9.350 V8" fill="none" stroke="#5f6368" stroke-width="1.300"/></svg>
<svg style="left:59.5px;top:382.3px" width="13" height="12" viewBox="0 0 13 12"><path d="M1 9.500 V7.500 L7.500 1 L9.500 3 L3 9.500Z" fill="none" stroke="#5f6368" stroke-width="1.300" stroke-linejoin="round"/><path d="M6 11 H12.500" stroke="#5f6368" stroke-width="2"/><path d="M8.500 0.500 L10 2" stroke="#5f6368" stroke-width="1.300"/></svg>
<svg style="left:59.5px;top:407.7px" width="13" height="11" viewBox="0 0 13 11"><path d="M0.700 1 H4.800 L6 2.500 H12.300 V10.300 H0.700Z" fill="none" stroke="#5f6368" stroke-width="1.400" stroke-linejoin="round"/><path d="M3.500 6.400 H9 M7 4.400 L9 6.400 L7 8.400" fill="none" stroke="#5f6368" stroke-width="1.200"/></svg>
<svg style="left:59.0px;top:432.3px" width="14" height="13" viewBox="0 0 14 13"><path d="M5 0.800 H8.500 L12 6.500 M5 0.800 L0.800 8 L2.800 11.300 H8" fill="none" stroke="#5f6368" stroke-width="1.300" stroke-linejoin="round"/><path d="M6.700 4 L4 8.500 H8.500Z" fill="none" stroke="#5f6368" stroke-width="1.100" stroke-linejoin="round"/><path d="M11.300 8 V12.800 M8.900 10.400 H13.700" stroke="#5f6368" stroke-width="1.300"/></svg>
<svg style="left:61.0px;top:457.9px" width="10" height="13" viewBox="0 0 10 13"><path d="M1.200 2.500 H8.800 V12.300 H1.200Z" fill="none" stroke="#5f6368" stroke-width="1.300"/><path d="M0 2.500 H10 M3.300 0.800 H6.700" stroke="#5f6368" stroke-width="1.400"/><path d="M3.700 4.800 V10.200 M6.300 4.800 V10.200" stroke="#5f6368" stroke-width="1.100"/></svg>
<svg style="left:59.0px;top:497.8px" width="14" height="12" viewBox="0 0 14 12"><path d="M3.200 6 A5.100 5.100 0 1 1 4.800 9.800" fill="none" stroke="#5f6368" stroke-width="1.300"/><path d="M0.500 4.800 L3.200 7.600 L5.800 4.800" fill="none" stroke="#5f6368" stroke-width="1.200"/><path d="M8.300 3.300 V6.300 L10.500 7.600" fill="none" stroke="#5f6368" stroke-width="1.200"/></svg>
<svg style="left:59.5px;top:522.7px" width="13" height="13" viewBox="0 0 13 13"><circle cx="6.500" cy="6.500" r="5.700" fill="none" stroke="#5f6368" stroke-width="1.300"/><path d="M4 5.500 L6 7.500 L9.300 3.800 M4 9.600 H9" fill="none" stroke="#5f6368" stroke-width="1.200"/></svg>
<svg style="left:59.5px;top:562.2px" width="13" height="13" viewBox="0 0 13 13"><circle cx="6.500" cy="6.500" r="5.700" fill="none" stroke="#5f6368" stroke-width="1.300"/><path d="M6.500 5.800 V9.800" stroke="#5f6368" stroke-width="1.400"/><circle cx="6.500" cy="3.800" r="0.850" fill="#5f6368"/></svg>
<svg style="left:59.5px;top:587.7px" width="13" height="13" viewBox="0 0 13 13"><path d="M5.08 2.23 L5.31 0.62 L7.69 0.62 L7.92 2.23 L9.49 3.14 L11.00 2.53 L12.19 4.59 L10.91 5.59 L10.91 7.41 L12.19 8.41 L11.00 10.47 L9.49 9.86 L7.92 10.77 L7.69 12.38 L5.31 12.38 L5.08 10.77 L3.51 9.86 L2.00 10.47 L0.81 8.41 L2.09 7.41 L2.09 5.59 L0.81 4.59 L2.00 2.53 L3.51 3.14Z" fill="none" stroke="#5f6368" stroke-width="1.250" stroke-linejoin="round"/><circle cx="6.500" cy="6.500" r="1.900" fill="none" stroke="#5f6368" stroke-width="1.200"/></svg>
<svg style="left:59.0px;top:613.9px" width="14" height="12" viewBox="0 0 14 12"><rect x="3" y="0" width="8" height="3" fill="#5f6368"/><path d="M1.800 3.800 H12.200 A1.800 1.800 0 0 1 14 5.600 V9.500 H11 V12 H3 V9.500 H0 V5.600 A1.800 1.800 0 0 1 1.800 3.800Z" fill="#5f6368"/><rect x="4.300" y="8" width="5.400" height="2.800" fill="#fff"/></svg>
<div class="abs" style="left:306px;top:335px;width:208.500px;height:166.400px;background:#fff;border-radius:4px;box-shadow:0 2px 6px 2px rgba(60,64,67,.15),0 1px 2px rgba(60,64,67,.3);"></div>
<div class="t sm" style="letter-spacing:-0.024px;top:348.5px;">Microsoft Excel (XLSX)</div>
<div class="t sm" style="letter-spacing:-0.044px;top:374.1px;">OpenDocument (.ods)</div>
<div class="t sm" style="letter-spacing:0.012px;top:399.7px;">Формат PDF (.pdf)</div>
<div class="t sm" style="letter-spacing:0.055px;top:425.3px;">Веб-страница (.html)</div>
<div class="t sm" style="letter-spacing:-0.047px;top:450.9px;">Формат CSV (.csv)</div>
<div class="t sm" style="letter-spacing:0.003px;top:476.5px;">Формат TSV (.tsv)</div>
<div class="abs" style="left:75.3px;top:104.2px;width:43.4px;height:43.4px;border-radius:50%;background:rgba(42,42,42,.89);"></div>
<div class="abs" style="left:22.8px;top:308.5px;width:43.4px;height:43.4px;border-radius:50%;background:rgba(42,42,42,.89);"></div>
<div class="abs" style="left:464.3px;top:311.3px;width:43.4px;height:43.4px;border-radius:50%;background:rgba(42,42,42,.89);"></div>
<div class="abs" style="left:40.7px;top:130.7px;width:55.8px;height:40.4px;border:4.5px solid #060606;border-radius:13px;box-sizing:border-box;box-shadow:0 1px 4px rgba(0,0,0,.45), inset 0 0 4px rgba(0,0,0,.4);"></div>
<div class="abs" style="left:50.0px;top:334.0px;width:252.2px;height:27.2px;border:4.4px solid #060606;border-radius:11px;box-sizing:border-box;box-shadow:0 1px 4px rgba(0,0,0,.45), inset 0 0 4px rgba(0,0,0,.4);"></div>
<div class="abs" style="left:310.7px;top:335.6px;width:170.9px;height:34.6px;border:4.4px solid #060606;border-radius:11px;box-sizing:border-box;box-shadow:0 1px 4px rgba(0,0,0,.45), inset 0 0 4px rgba(0,0,0,.4);"></div>
<div class="t" style="left:76.4px;top:114.7px;width:40px;text-align:center;font-family:NanumGothic,'Liberation Sans',sans-serif;font-weight:800;font-size:24.5px;color:#fff;-webkit-text-stroke:1.9px #fff;text-shadow:2.05px 0.00px 0 #000,1.78px 1.02px 0 #000,1.03px 1.78px 0 #000,0.00px 2.05px 0 #000,-1.02px 1.78px 0 #000,-1.78px 1.02px 0 #000,-2.05px 0.00px 0 #000,-1.78px -1.02px 0 #000,-1.03px -1.78px 0 #000,-0.00px -2.05px 0 #000,1.03px -1.78px 0 #000,1.78px -1.03px 0 #000,0 1px 2px #000;">1</div>
<div class="t" style="left:24.8px;top:317.1px;width:40px;text-align:center;font-family:NanumGothic,'Liberation Sans',sans-serif;font-weight:800;font-size:27.5px;color:#fff;-webkit-text-stroke:1.0px #fff;text-shadow:1.60px 0.00px 0 #000,1.39px 0.80px 0 #000,0.80px 1.39px 0 #000,0.00px 1.60px 0 #000,-0.80px 1.39px 0 #000,-1.39px 0.80px 0 #000,-1.60px 0.00px 0 #000,-1.39px -0.80px 0 #000,-0.80px -1.39px 0 #000,-0.00px -1.60px 0 #000,0.80px -1.39px 0 #000,1.39px -0.80px 0 #000,0 1px 2px #000;">2</div>
<div class="t" style="left:465.5px;top:320.0px;width:40px;text-align:center;font-family:NanumGothic,'Liberation Sans',sans-serif;font-weight:800;font-size:26px;color:#fff;-webkit-text-stroke:1.0px #fff;text-shadow:1.60px 0.00px 0 #000,1.39px 0.80px 0 #000,0.80px 1.39px 0 #000,0.00px 1.60px 0 #000,-0.80px 1.39px 0 #000,-1.39px 0.80px 0 #000,-1.60px 0.00px 0 #000,-1.39px -0.80px 0 #000,-0.80px -1.39px 0 #000,-0.00px -1.60px 0 #000,0.80px -1.39px 0 #000,1.39px -0.80px 0 #000,0 1px 2px #000;">3</div>
</body>
</html>
